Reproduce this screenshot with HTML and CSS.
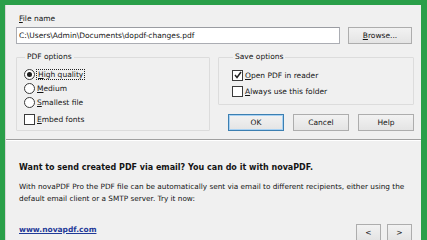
FILE: index.html
```html
<!DOCTYPE html>
<html lang="en">
<head>
  <meta charset="UTF-8" />
  <title>doPDF</title>
  <link rel="stylesheet" href="styles.css">
</head>
<body>
  <div class="window">
    <div class="dialog">
      <div class="field-label"><u>F</u>ile name</div>
      <div class="file-row">
        <div class="textbox">C:\Users\Admin\Documents\dopdf-changes.pdf</div>
        <button class="btn browse"><u>B</u>rowse...</button>
      </div>

      <div class="options">
        <fieldset class="group pdf-group">
          <legend>PDF options</legend>
          <div class="opt"><span class="radio on"></span><span class="focus"><u>H</u>igh quality</span></div>
          <div class="opt"><span class="radio"></span><span><u>M</u>edium</span></div>
          <div class="opt"><span class="radio"></span><span><u>S</u>mallest file</span></div>
          <div class="opt embed"><span class="check"></span><span><u>E</u>mbed fonts</span></div>
        </fieldset>

        <div class="right-col">
          <fieldset class="group save-group">
            <legend>Save options</legend>
            <div class="opt"><span class="check">
              <svg width="8" height="8" viewBox="0 0 8 8"><path d="M1 4 L3 6.5 L7 1" fill="none" stroke="#222" stroke-width="1.5"/></svg>
            </span><span><u>O</u>pen PDF in reader</span></div>
            <div class="opt"><span class="check"></span><span><u>A</u>lways use this folder</span></div>
          </fieldset>
          <div class="buttons">
            <button class="btn default">OK</button>
            <button class="btn">Cancel</button>
            <button class="btn">Help</button>
          </div>
        </div>
      </div>
    </div>

    <div class="separator"></div>

    <div class="promo">
      <h2>Want to send created PDF via email? You can do it with novaPDF.</h2>
      <p>With novaPDF Pro the PDF file can be automatically sent via email to different recipients, either using the default email client or a SMTP server. Try it now:</p>
      <div class="promo-foot">
        <a href="#" class="link">www.novapdf.com</a>
        <div class="nav">
          <button class="btn nav-btn">&lt;</button>
          <button class="btn nav-btn">&gt;</button>
        </div>
      </div>
    </div>
  </div>
</body>
</html>
```

FILE: styles.css
```css
* { box-sizing: border-box; }

body {
  margin: 0;
  background: #2a9f49;
  font-family: 'DejaVu Sans', sans-serif;
  font-size: 7.5px;
  color: #141414;
  height: 240px;
  overflow: hidden;
}

u { text-decoration: underline; text-underline-offset: 1px; }

.window {
  margin: 5px 6px 0 5px;
  background: #f0f0f0;
  height: 235px;
  border-left: 1px solid #d6d6d6;
}

.dialog {
  padding: 8px 9px 0 10px;
}

.field-label {
  height: 12px;
  line-height: 12px;
  padding-left: 3px;
}

.file-row {
  display: flex;
  gap: 8px;
  margin-top: 2px;
}

.textbox {
  flex: 1;
  height: 17px;
  line-height: 15px;
  background: #fff;
  border: 1px solid #abadb3;
  border-top-color: #9a9ca2;
  padding-left: 2px;
  white-space: nowrap;
  overflow: hidden;
}

.btn {
  font-family: inherit;
  font-size: 7.5px;
  color: #141414;
  height: 17px;
  padding: 0;
  background: linear-gradient(#f2f2f2, #e4e4e4);
  border: 1px solid #adadad;
  border-radius: 0;
}

.browse { width: 64px; }

.options {
  display: grid;
  grid-template-columns: 194px 196px;
  gap: 8px;
  margin-top: 7px;
}

.group {
  margin: 0;
  padding: 4px 0 0 7px;
  border: 1px solid #dcdcdc;
  border-radius: 1px;
}

.group legend {
  padding: 0 2px;
  margin-left: 1px;
  line-height: 12px;
  height: 12px;
}

.pdf-group { height: 80px; }
.save-group { height: 54px; padding-left: 13px; }

.opt {
  display: flex;
  align-items: center;
  gap: 2px;
  height: 14px;
}

.save-group .opt { height: 16px; }

.embed { margin-top: 3px; }

.radio {
  width: 11px;
  height: 11px;
  border-radius: 50%;
  border: 1px solid #3a3a3a;
  background: #fff;
  display: flex;
  align-items: center;
  justify-content: center;
}

.radio.on::after {
  content: '';
  width: 5px;
  height: 5px;
  border-radius: 50%;
  background: #1e1e1e;
}

.check {
  width: 11px;
  height: 11px;
  border: 1px solid #3a3a3a;
  background: #fff;
  display: flex;
  align-items: center;
  justify-content: center;
}

.focus {
  outline: 1px dotted #222;
  outline-offset: 0;
  padding: 0 1px;
}

.right-col {
  display: flex;
  flex-direction: column;
}

.buttons {
  display: flex;
  gap: 9px;
  margin-top: 9px;
  padding-left: 10px;
}

.buttons .btn { width: 56px; }

.btn.default {
  border-color: #3c7fb1;
  box-shadow: inset 0 0 0 1px #a7d1f3;
}

.separator {
  margin-top: 8px;
  border-top: 1px solid #a0a0a0;
  border-bottom: 1px solid #fff;
}

.promo {
  padding: 21px 9px 0 13px;
}

.promo h2 {
  margin: 0;
  font-size: 8px;
  font-weight: bold;
  line-height: 12px;
}

.promo p {
  margin: 7px 0 0;
  font-size: 7.3px;
  line-height: 12px;
  height: 36px;
}

.promo-foot {
  display: flex;
  justify-content: space-between;
  align-items: flex-start;
  margin-top: 7px;
}

.link {
  color: #1f3a98;
  font-weight: bold;
  line-height: 12px;
  margin-top: 0;
}

.nav {
  display: flex;
  gap: 6px;
}

.nav-btn { width: 25px; }
```
